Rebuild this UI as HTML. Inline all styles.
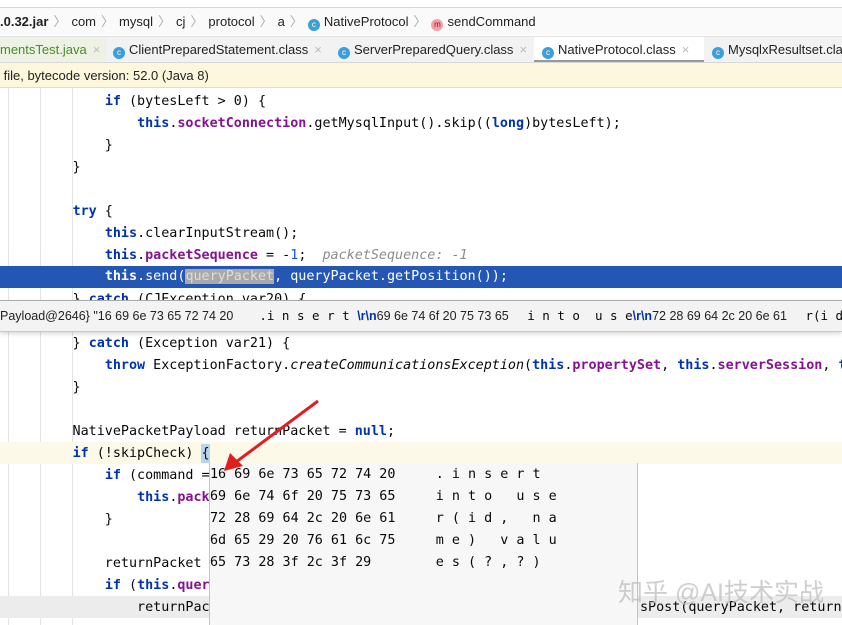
<!DOCTYPE html>
<html><head><meta charset="utf-8"><style>
*{margin:0;padding:0;box-sizing:border-box}
body{width:842px;height:625px;overflow:hidden;background:#fff;position:relative;font-family:"Liberation Sans","DejaVu Sans",sans-serif}
.abs{position:absolute;overflow:hidden}
.crumb{top:7px;left:0;width:842px;height:28px;background:#fafafa;border-top:1px solid #d8d8d8;font-size:13px;color:#222;line-height:27px;white-space:nowrap}
.crumb span.s{color:#aaa;margin:0 5px}
.ic{display:inline-block;width:12px;height:12px;border-radius:50%;background:#3d9fd8;color:#fff;font-size:8px;line-height:12px;text-align:center;vertical-align:-1px;margin-right:4px}
.tabs{top:36px;left:0;width:842px;height:27px;background:#f2f2f2;border-top:1px solid #e2e2e2;border-bottom:1px solid #d8d8d8;font-size:13px;line-height:25px;white-space:nowrap}
.tab{position:absolute;top:0;height:26px;color:#222;overflow:hidden}
.tab .x{color:#bbb;margin-left:6px}
.banner{top:63px;left:0;width:842px;height:25px;background:#fdf8dd;border-bottom:1px solid #e0dcc8;font-size:13px;line-height:25px;color:#222}
.code{font-family:"DejaVu Sans Mono","Liberation Mono",monospace;font-size:13.4px;white-space:pre;color:#080808}
.ln{position:absolute;left:0;height:22px;line-height:22px;width:842px;overflow:hidden}
.k{color:#0033b3;font-weight:bold}
.fb{color:#871094;font-weight:bold}
.i{font-style:italic}
.g{color:#8c8c8c;font-style:italic}
.vl{position:absolute;top:88px;bottom:0;width:1px;background:#e4e4e4}
</style></head><body>
<div class="abs crumb"><b>.0.32.jar</b><span class="s">〉</span>com<span class="s">〉</span>mysql<span class="s">〉</span>cj<span class="s">〉</span>protocol<span class="s">〉</span>a<span class="s">〉</span><span class="ic">c</span>NativeProtocol<span class="s">〉</span><span class="ic" style="background:#f4a0a8;color:#b02">m</span>sendCommand</div>
<div class="abs tabs">
<div class="tab" style="left:0;width:106px;background:#eef2e4;color:#4c8a2a">mentsTest.java<span class="x">×</span></div>
<div class="tab" style="left:113px"><span class="ic">c</span>ClientPreparedStatement.class<span class="x">×</span></div>
<div class="tab" style="left:338px"><span class="ic">c</span>ServerPreparedQuery.class<span class="x">×</span></div>
<div class="tab" style="left:534px;width:170px;background:#fff;padding-left:8px;border-bottom:3px solid #9a9a9a"><span class="ic">c</span>NativeProtocol.class<span class="x">×</span></div>
<div class="tab" style="left:712px;width:130px"><span class="ic">c</span>MysqlxResultset.cla</div>
</div>
<div class="abs banner">&nbsp;file, bytecode version: 52.0 (Java 8)</div>
<div class="vl" style="left:8px"></div><div class="vl" style="left:40px"></div><div class="vl" style="left:72px"></div>
<div class="abs" style="left:0;top:266px;width:842px;height:22px;background:#2457b4"></div>
<div class="abs" style="left:0;top:442px;width:842px;height:22px;background:#fdf9e8"></div>
<div class="abs" style="left:0;top:596px;width:842px;height:22px;background:#ececec"></div>
<div class="abs" style="left:201px;top:444px;width:9px;height:19px;background:#b8d4ef"></div>
<div class="code">
<div class="ln" style="top:91px">             <span class="k">if</span> (bytesLeft &gt; 0) {</div>
<div class="ln" style="top:113px">                 <span class="k">this</span>.<span class="fb">socketConnection</span>.getMysqlInput().skip((<span class="k">long</span>)bytesLeft);</div>
<div class="ln" style="top:135px">             }</div>
<div class="ln" style="top:157px">         }</div>
<div class="ln" style="top:201px">         <span class="k">try</span> {</div>
<div class="ln" style="top:223px">             <span class="k">this</span>.clearInputStream();</div>
<div class="ln" style="top:245px">             <span class="k">this</span>.<span class="fb">packetSequence</span> = -<span style="color:#1750eb">1</span>;  <span class="g">packetSequence: -1</span></div>
<div class="ln" style="top:266px;color:#fff">             <b>this</b>.send(<span style="background:#a9a9a9;color:#ddd">queryPacket</span>, queryPacket.getPosition());</div>
<div class="ln" style="top:289px">         } <span class="k">catch</span> (CJException var20) {</div>
<div class="ln" style="top:333px">         } <span class="k">catch</span> (Exception var21) {</div>
<div class="ln" style="top:355px">             <span class="k">throw</span> ExceptionFactory.<span class="i">createCommunicationsException</span>(<span class="k">this</span>.<span class="fb">propertySet</span>, <span class="k">this</span>.<span class="fb">serverSession</span>, <span class="k">t</span></div>
<div class="ln" style="top:377px">         }</div>
<div class="ln" style="top:421px">         NativePacketPayload returnPacket = <span class="k">null</span>;</div>
<div class="ln" style="top:443px">         <span class="k">if</span> (!skipCheck) {</div>
<div class="ln" style="top:465px">             <span class="k">if</span> (command =</div>
<div class="ln" style="top:487px">                 <span class="k">this</span>.<span class="fb">pack</span></div>
<div class="ln" style="top:509px">             }</div>
<div class="ln" style="top:553px">             returnPacket</div>
<div class="ln" style="top:575px">             <span class="k">if</span> (<span class="k">this</span>.<span class="fb">quer</span></div>
<div class="ln" style="top:597px">                 returnPac</div>
</div>
<div class="abs" style="left:0;top:300px;width:842px;height:32px;background:#f3f3f3;border-top:1px solid #aaa;border-bottom:1px solid #c8c8c8;font-size:12.5px;line-height:30px;white-space:nowrap;color:#222;box-shadow:0 2px 4px rgba(0,0,0,.15)">Payload@2646} "16 69 6e 73 65 72 74 20 <span class="code" style="font-size:12.5px">   .i n s e r t </span><b style="color:#0033b3">\r\n</b>69 6e 74 6f 20 75 73 65 <span class="code" style="font-size:12.5px">  i n t o  u s e</span><b style="color:#0033b3">\r\n</b>72 28 69 64 2c 20 6e 61 <span class="code" style="font-size:12.5px">  r(i d,  n a</span><b style="color:#0033b3">\</b></div>
<div class="abs code" style="left:209px;top:463px;width:429px;height:162px;background:#f7f7f7;border-left:1px solid #c4c4c4;border-right:1px solid #c4c4c4;line-height:22px;padding-top:1px">16 69 6e 73 65 72 74 20     . i n s e r t
69 6e 74 6f 20 75 73 65     i n t o   u s e
72 28 69 64 2c 20 6e 61     r ( i d ,   n a
6d 65 29 20 76 61 6c 75     m e )   v a l u
65 73 28 3f 2c 3f 29        e s ( ? , ? )</div>
<div class="abs code" style="left:640px;top:597px;height:22px;line-height:22px;width:202px">sPost(queryPacket, return</div>
<div class="abs" style="left:618px;top:573px;font-family:'Liberation Sans','Noto Sans CJK SC',sans-serif;font-size:25px;color:rgba(190,190,190,.75);white-space:nowrap">知乎 @AI技术实战</div>
<svg style="position:absolute;left:0;top:0" width="842" height="625"><line x1="318" y1="401" x2="236" y2="462" stroke="#e02020" stroke-width="3"/><polygon points="224,471 230,453 243,466" fill="#e02020"/></svg>
</body></html>
